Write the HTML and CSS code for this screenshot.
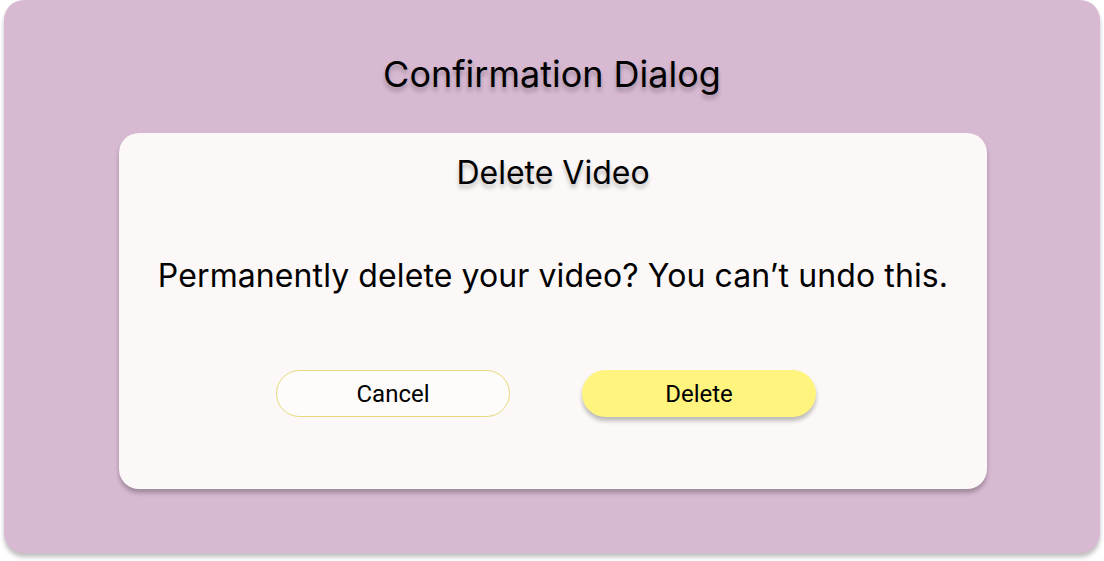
FILE: index.html
```html
<!DOCTYPE html>
<html>
<head>
<meta charset="utf-8">
<link rel="stylesheet" href="styles.css">
</head>
<body>
<main class="frame">
  <h1 class="frame-title">Confirmation Dialog</h1>
  <section class="dialog">
    <h2 class="dialog-title">Delete Video</h2>
    <p class="dialog-message">Permanently delete your video? You can’t undo this.</p>
    <div class="dialog-actions">
      <button class="btn btn-cancel">Cancel</button>
      <button class="btn btn-delete">Delete</button>
    </div>
  </section>
</main>
</body>
</html>
```
FILE: styles.css
```css
html, body {
  margin: 0;
  padding: 0;
  background: #ffffff;
}
body {
  width: 1104px;
  height: 561px;
  font-family: "Inter", "Roboto", sans-serif;
}
.frame {
  box-sizing: border-box;
  margin: 0 4px 0 4px;
  width: 1096px;
  height: 553px;
  background: #d7b9d2;
  border-radius: 20px;
  box-shadow: 0 4px 4px rgba(0, 0, 0, 0.25);
  display: flex;
  flex-direction: column;
  align-items: center;
  padding-top: 50px;
}
.frame-title {
  margin: 0;
  font-size: 36px;
  font-weight: 400;
  line-height: 48px;
  color: #000;
  text-shadow: 0 4px 4px rgba(0, 0, 0, 0.25);
}
.dialog {
  box-sizing: border-box;
  margin-top: 35px;
  margin-left: 2px;
  width: 868px;
  height: 356px;
  background: #fcf8f8;
  border-radius: 20px;
  box-shadow: 0 4px 4px rgba(0, 0, 0, 0.25);
  display: flex;
  flex-direction: column;
  align-items: center;
  padding-top: 18px;
}
.dialog-title {
  margin: 0;
  font-size: 32px;
  font-weight: 400;
  line-height: 44px;
  color: #000;
  text-shadow: 0 4px 4px rgba(0, 0, 0, 0.25);
}
.dialog-message {
  margin: 59px 0 0 0;
  font-size: 32px;
  font-weight: 400;
  line-height: 44px;
  letter-spacing: 0.1px;
  color: #000;
}
.dialog-actions {
  margin-top: 72px;
  margin-right: 14px;
  display: flex;
  gap: 72px;
}
.btn {
  box-sizing: border-box;
  width: 234px;
  height: 47px;
  border-radius: 24px;
  font-family: "Roboto", "Inter", sans-serif;
  font-size: 24px;
  color: #000;
  cursor: pointer;
}
.btn-cancel {
  background: #fefcfa;
  border: 1px solid #e8d97a;
}
.btn-delete {
  background: #fff47e;
  border: none;
  box-shadow: 0 4px 4px rgba(0, 0, 0, 0.25);
}
```
